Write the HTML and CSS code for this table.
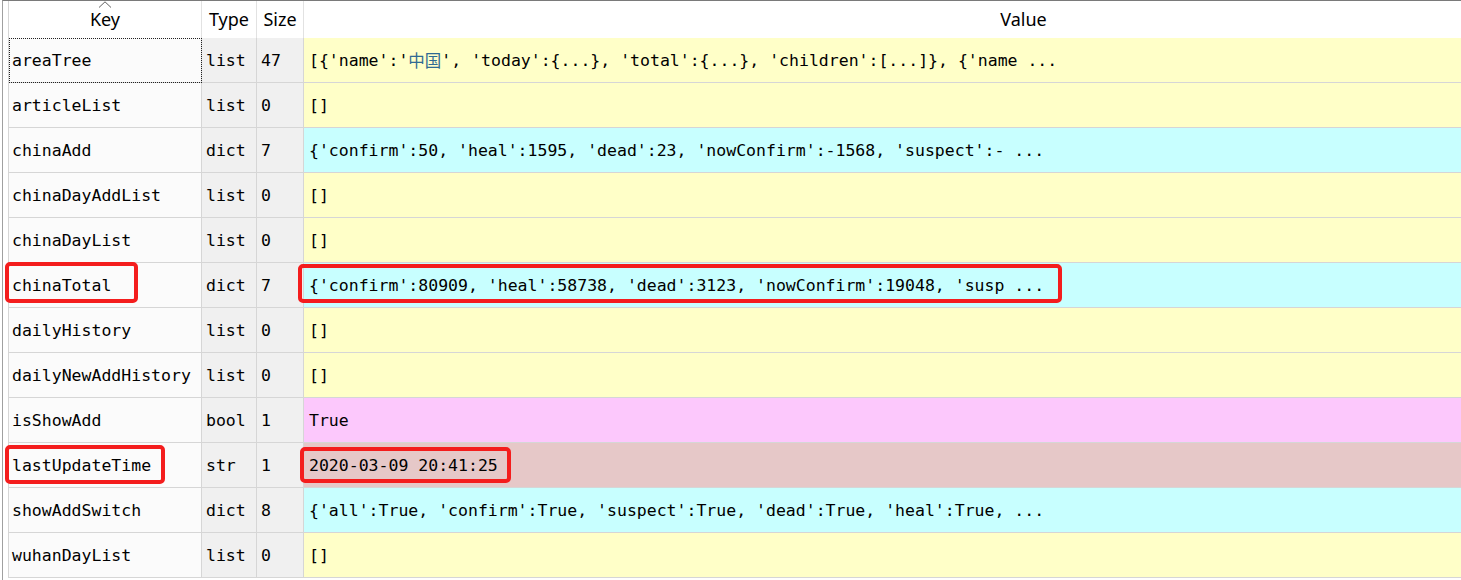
FILE: index.html
```html
<!DOCTYPE html>
<html>
<head>
<meta charset="utf-8">
<link rel="stylesheet" href="styles.css">
</head>
<body>
<div class="frame">
  <div class="table">
    <div class="hcell hkey">Key<svg class="sort" width="14" height="7" viewBox="0 0 14 7"><polyline points="1,6.5 7,0.8 13,6.5" fill="none" stroke="#606060" stroke-width="1"/></svg></div>
    <div class="hcell">Type</div>
    <div class="hcell">Size</div>
    <div class="hcell">Value</div>

    <div class="cell key focus">areaTree</div><div class="cell meta">list</div><div class="cell meta">47</div><div class="cell val list">[{'name':'<span class="cjk">中国</span>', 'today':{...}, 'total':{...}, 'children':[...]}, {'name ...</div>

    <div class="cell key">articleList</div><div class="cell meta">list</div><div class="cell meta">0</div><div class="cell val list">[]</div>

    <div class="cell key">chinaAdd</div><div class="cell meta">dict</div><div class="cell meta">7</div><div class="cell val dict">{'confirm':50, 'heal':1595, 'dead':23, 'nowConfirm':-1568, 'suspect':- ...</div>

    <div class="cell key">chinaDayAddList</div><div class="cell meta">list</div><div class="cell meta">0</div><div class="cell val list">[]</div>

    <div class="cell key">chinaDayList</div><div class="cell meta">list</div><div class="cell meta">0</div><div class="cell val list">[]</div>

    <div class="cell key">chinaTotal</div><div class="cell meta">dict</div><div class="cell meta">7</div><div class="cell val dict">{'confirm':80909, 'heal':58738, 'dead':3123, 'nowConfirm':19048, 'susp ...</div>

    <div class="cell key">dailyHistory</div><div class="cell meta">list</div><div class="cell meta">0</div><div class="cell val list">[]</div>

    <div class="cell key">dailyNewAddHistory</div><div class="cell meta">list</div><div class="cell meta">0</div><div class="cell val list">[]</div>

    <div class="cell key">isShowAdd</div><div class="cell meta">bool</div><div class="cell meta">1</div><div class="cell val bool">True</div>

    <div class="cell key">lastUpdateTime</div><div class="cell meta">str</div><div class="cell meta">1</div><div class="cell val str">2020-03-09 20:41:25</div>

    <div class="cell key">showAddSwitch</div><div class="cell meta">dict</div><div class="cell meta">8</div><div class="cell val dict">{'all':True, 'confirm':True, 'suspect':True, 'dead':True, 'heal':True, ...</div>

    <div class="cell key">wuhanDayList</div><div class="cell meta">list</div><div class="cell meta">0</div><div class="cell val list">[]</div>
  </div>

  <div class="mark mark-k1"></div>
  <div class="mark mark-v1"></div>
  <div class="mark mark-k2"></div>
  <div class="mark mark-v2"></div>
</div>
</body>
</html>
```

FILE: styles.css
```css
html, body {
  margin: 0;
  padding: 0;
  background: #ffffff;
  overflow: hidden;
}

.frame {
  position: relative;
  margin-left: 2px;
  border-left: 1px solid #a0a0a0;
  border-top: 1px solid #7a7a7a;
  padding-left: 5px;
  height: 579px;
  overflow: hidden;
}

.table {
  display: grid;
  grid-template-columns: 193px 55px 47px 1440px;
  grid-auto-rows: 45px;
  grid-template-rows: 37px;
  border-left: 1px solid #d6d6d6;
  width: 1735px;
}

.hcell {
  position: relative;
  display: flex;
  align-items: center;
  justify-content: center;
  background: #ffffff;
  border-right: 1px solid #e2e2e2;
  font-family: "Noto Sans", "Open Sans", sans-serif;
  font-size: 18px;
  color: #000;
  padding-bottom: 2px;
  box-sizing: border-box;
}

.sort {
  position: absolute;
  left: 89px;
  top: 0px;
}

.cell {
  display: flex;
  align-items: center;
  box-sizing: border-box;
  border-right: 1px solid #d6d6d6;
  border-bottom: 1px solid #d6d6d6;
  font-family: "DejaVu Sans Mono", "Liberation Mono", "Noto Sans CJK SC", monospace;
  font-size: 16.5px;
  color: #000;
  padding-left: 4px;
  white-space: pre;
  overflow: hidden;
}

.key {
  background: #fbfbfb;
  padding-left: 3px;
}

.meta {
  background: #f0f0f0;
}

.val {
  padding-left: 5px;
}

.focus {
  outline: 1px dotted #222;
  outline-offset: -1px;
}

.list { background: #ffffc8; }
.dict { background: #c8ffff; }
.bool { background: #fcc8fc; }
.str  { background: #e6c8c8; }

.cjk {
  font-family: "Noto Sans CJK SC", sans-serif;
  color: #2f6a93;
}

.mark {
  position: absolute;
  border: 4px solid #f41d1d;
  border-radius: 5px;
  box-sizing: border-box;
}

.mark-k1 { left: 2px; top: 261px; width: 133px; height: 41px; }
.mark-v1 { left: 295px; top: 263px; width: 764px; height: 39px; }
.mark-k2 { left: 2px; top: 444px; width: 160px; height: 39px; }
.mark-v2 { left: 297px; top: 446px; width: 211px; height: 36px; }
```
